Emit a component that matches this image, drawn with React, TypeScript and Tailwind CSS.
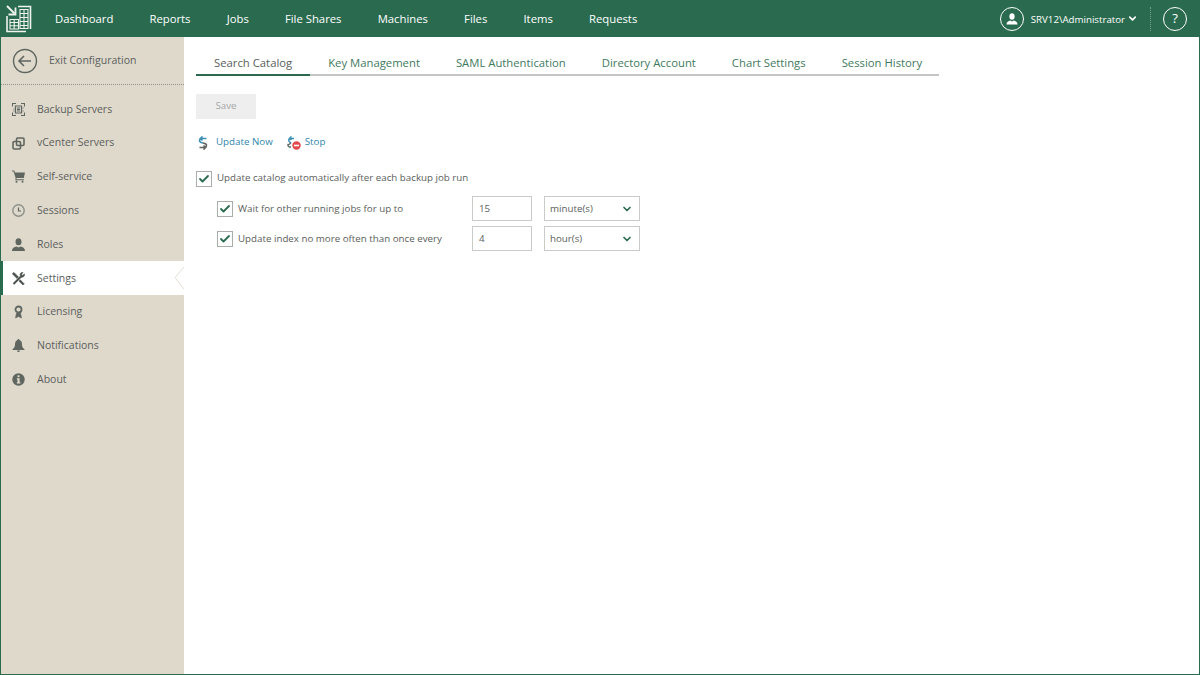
import React from 'react';
import { ChevronDown, Check } from 'lucide-react';

const font = { fontFamily: '"Open Sans", sans-serif' };

const topLinks = ['Dashboard', 'Reports', 'Jobs', 'File Shares', 'Machines', 'Files', 'Items', 'Requests'];
const tabs = ['Search Catalog', 'Key Management', 'SAML Authentication', 'Directory Account', 'Chart Settings', 'Session History'];

function Logo() {
  return (
    <svg width="26" height="28" viewBox="0 0 26 28" fill="none" stroke="#eef3f0">
      <path d="M1 1l7.500 7.500" strokeWidth="2" />
      <path d="M9.500 2.500v7h-7" strokeWidth="1.800" />
      <path d="M12 1.500h12.500V24M1 11v15.500h19" strokeWidth="1.600" />
      <path d="M14 4.500h8v19h-8zM14 8.500h8M14 12.500h8M14 16.500h8M14 20.500h8M18 4.500v19" strokeWidth="1.100" />
      <path d="M4 14.500h8.500v9.500H4zM4 17.500h8.500M4 20.700h8.500M8.200 14.500V24" strokeWidth="1.100" />
    </svg>
  );
}

const iconColor = '#5f6660';

const sideItems: { label: string; icon: React.ReactNode }[] = [
  {
    label: 'Backup Servers',
    icon: (
      <svg width="13" height="13" viewBox="0 0 13 13" fill="none" stroke={iconColor} strokeWidth="1.100">
        <path d="M.5 3.500V.5H4M9 .5h3.500v3M12.500 9.500v3H9M4 12.500H.5v-3" />
        <path d="M3.500 3h6v7h-6zM5 5h3M5 6.500h3M5 8h3" strokeWidth="1.200" />
        <path d="M1.500 6h1M1.500 8h1M10.500 5h1M10.500 8h1" />
      </svg>
    ),
  },
  {
    label: 'vCenter Servers',
    icon: (
      <svg width="13" height="13" viewBox="0 0 13 13" fill="none" stroke={iconColor} strokeWidth="1.600">
        <rect x="4.500" y="1" width="7.500" height="7.500" rx="1.200" />
        <rect x="1" y="4.500" width="7.500" height="7.500" rx="1.200" />
      </svg>
    ),
  },
  {
    label: 'Self-service',
    icon: (
      <svg width="13" height="13" viewBox="0 0 13 13" fill={iconColor}>
        <path d="M0 .5h2.300l.7 2h10l-1.200 5.500H4.300L4.700 9.300h7.300v1H3.300l.3-2.300L1.600 1.500H0z" />
        <circle cx="4.500" cy="11.800" r="1" />
        <circle cx="10.500" cy="11.800" r="1" />
      </svg>
    ),
  },
  {
    label: 'Sessions',
    icon: (
      <svg width="13" height="13" viewBox="0 0 13 13" fill="none" stroke={iconColor}>
        <circle cx="6.500" cy="6.500" r="5.700" strokeWidth="1.400" stroke="#8b908a" />
        <path d="M6.500 3.500v3.500H9" strokeWidth="1.200" />
      </svg>
    ),
  },
  {
    label: 'Roles',
    icon: (
      <svg width="13" height="13" viewBox="0 0 13 13" fill={iconColor}>
        <ellipse cx="6.500" cy="3.700" rx="3" ry="3.500" />
        <path d="M0 13c0-3 2.500-4 4.500-4.500L6.500 9.500l2-1C10.500 9 13 10 13 13z" />
      </svg>
    ),
  },
  {
    label: 'Settings',
    icon: (
      <svg width="13" height="13" viewBox="0 0 13 13" fill="none" stroke="#4b524d">
        <path d="M1.500 12L9 4.500" strokeWidth="2" />
        <path d="M8 2.500a2.500 2.500 0 0 1 3-2l-1.500 1.700 1.200 1.200 1.700-1.500a2.500 2.500 0 0 1-3.500 3z" fill="#4b524d" strokeWidth=".6" />
        <path d="M1 1l1-.5L6.500 5 5 6.500.5 2zM8 7.500L12.300 12 11 13 6.800 9" fill="#4b524d" strokeWidth=".6" />
      </svg>
    ),
  },
  {
    label: 'Licensing',
    icon: (
      <svg width="13" height="14" viewBox="0 0 13 14" fill="none" stroke={iconColor}>
        <circle cx="6.500" cy="4.500" r="3" strokeWidth="1.800" />
        <path d="M4.500 8l-1 5 3-1.500 3 1.500-1-5" fill={iconColor} strokeWidth=".6" />
      </svg>
    ),
  },
  {
    label: 'Notifications',
    icon: (
      <svg width="13" height="13" viewBox="0 0 13 13" fill={iconColor}>
        <path d="M6.500 0c.7 0 1 .4 1 1C9.500 1.500 10 3.500 10 5.500c0 2 .7 3.500 2.500 4.800v.7H.5v-.7C2.300 9 3 7.500 3 5.500 3 3.500 3.500 1.500 5.500 1c0-.6.300-1 1-1z" />
        <path d="M5 11.500h3c0 .9-.6 1.500-1.500 1.500S5 12.400 5 11.500z" />
      </svg>
    ),
  },
  {
    label: 'About',
    icon: (
      <svg width="13" height="13" viewBox="0 0 13 13">
        <circle cx="6.500" cy="6.500" r="6.200" fill={iconColor} />
        <rect x="5.500" y="2.300" width="2" height="1.900" fill="#dfd9cc" />
        <path d="M4.800 5.300h2.800v4h.8v1.200H4.800V9.300h.7V6.500h-.7z" fill="#dfd9cc" />
      </svg>
    ),
  },
];

function CheckBox() {
  return (
    <span className="flex h-[16px] w-[16px] shrink-0 items-center justify-center border border-[#a9aeaa] bg-white">
      <Check size={12} strokeWidth={3.6} className="text-[#2a6b4f]" />
    </span>
  );
}

function Row({ label, value, unit }: { label: string; value: string; unit: string }) {
  return (
    <div className="flex h-[30px] items-center">
      <CheckBox />
      <span className="ml-[5px] w-[234px] pt-[1px] text-[#5b605c]">{label}</span>
      <span className="flex h-[25px] w-[60px] items-center border border-[#c9cbc8] pl-[6px] pt-[1px] text-[#5b605c]">{value}</span>
      <span className="ml-[12px] flex h-[25px] w-[96px] items-center justify-between border border-[#c9cbc8] pl-[5px] pr-[6px] pt-[1px] text-[#5b605c]">
        {unit}
        <ChevronDown size={12} strokeWidth={3.4} className="text-[#2a6b4f]" />
      </span>
    </div>
  );
}

export default function App() {
  return (
    <div className="flex h-[675px] w-[1200px] flex-col overflow-hidden bg-white text-[9.750px]" style={font}>
      {/* Top bar */}
      <header className="flex h-[37px] shrink-0 items-center bg-[#2a6b4f] text-white">
        <div className="flex w-[55px] shrink-0 justify-start pl-[6px]">
          <Logo />
        </div>
        <nav className="flex gap-[36.150px] pt-[1px] text-[11.300px]">
          {topLinks.map((link) => (
            <span key={link}>{link}</span>
          ))}
        </nav>
        <div className="ml-auto mr-[13px] flex items-center">
          <span className="flex h-[24px] w-[24px] items-center justify-center rounded-full border-[1.500px] border-white">
            <svg width="12" height="12" viewBox="0 0 12 12" fill="white">
              <ellipse cx="6" cy="3.500" rx="2.600" ry="3.200" />
              <path d="M.5 11.500c0-2.600 2-3.600 3.700-4L6 8.500l1.800-1c1.700.4 3.700 1.400 3.700 4z" />
            </svg>
          </span>
          <span className="ml-[7px] pt-[3px] text-[9.700px]">SRV12\Administrator</span>
          <ChevronDown size={11} strokeWidth={3.5} className="ml-[2px]" />
          <span className="ml-[12px] h-[24px] border-l border-dotted border-[#7ba08e]" />
          <span className="ml-[12px] flex h-[24px] w-[24px] items-center justify-center rounded-full border-[1.500px] border-white text-[13px]">?</span>
        </div>
      </header>

      <div className="flex min-h-0 flex-1 border-b border-r border-[#2a6b4f]">
        {/* Sidebar */}
        <aside className="w-[184px] shrink-0 border-l border-[#2a6b4f] bg-[#dfd9cc] text-[10.500px] text-[#5b605c]">
          <div className="flex h-[48px] items-center border-b border-dotted border-[#8f9088] pl-[11px]">
            <svg width="26" height="26" viewBox="0 0 26 26" fill="none" stroke="#5f6660" strokeWidth="1.400">
              <circle cx="13" cy="13" r="11.500" />
              <path d="M19 13H7M12 8l-5 5 5 5" strokeWidth="1.600" />
            </svg>
            <span className="ml-[11px]">Exit Configuration</span>
          </div>
          <div className="pt-[7.500px]">
            {sideItems.map(({ label, icon }) =>
              label === 'Settings' ? (
                <div key={label} className="relative flex h-[33.800px] items-center border-l-[2px] border-[#2a6b4f] bg-white pl-[9px]">
                  <span className="flex w-[25px] items-center">{icon}</span>
                  {label}
                  <svg width="10" height="24" viewBox="0 0 10 24" fill="none" stroke="#e3dfd5" className="absolute right-0 top-[5px]">
                    <path d="M10 1L1 11.500 10 23" />
                  </svg>
                </div>
              ) : (
                <div key={label} className="flex h-[33.800px] items-center pl-[11px]">
                  <span className="flex w-[25px] items-center">{icon}</span>
                  {label}
                </div>
              ),
            )}
          </div>
        </aside>

        {/* Content */}
        <main className="min-w-0 flex-1 pl-[12px]">
          <div className="flex h-[38.500px] w-[743px] items-end border-b-2 border-[#c3c6c3]">
            {tabs.map((tab, i) => (
              <span
                key={tab}
                className={`-mb-[2px] flex h-[24px] items-start whitespace-nowrap border-b-2 px-[18px] pt-[3px] text-[11.300px] ${
                  i === 0 ? 'border-[#2a6b4f] text-[#5b605c]' : 'border-transparent text-[#3f7a60]'
                }`}
              >
                {tab}
              </span>
            ))}
          </div>

          <div className="mt-[18px] flex h-[25px] w-[60px] items-center justify-center bg-[#eeeeee] pt-[1px] text-[#a8a8a8]">Save</div>

          <div className="mt-[15px] flex h-[18px] items-center text-[#2f86ad]">
            <svg width="12" height="14" viewBox="0 0 12 14" fill="none" strokeWidth="1.700" className="ml-[1px]">
              <path d="M9.500 2.500H4.500a2 2 0 0 0-1 3.700L6 7" stroke="#3d8fb5" />
              <path d="M2.500 11.500H7.500a2 2 0 0 0 1-3.700L6 7" stroke="#5f6660" />
              <path d="M5.500 .5L3.500 2.500l2 2" stroke="#3d8fb5" />
              <path d="M6.500 9.500l2 2-2 2" stroke="#5f6660" />
            </svg>
            <span className="ml-[7px]">Update Now</span>
            <svg width="14" height="14" viewBox="0 0 14 14" fill="none" strokeWidth="1.500" className="ml-[14px]">
              <path d="M7 2.500H3.500a1.800 1.800 0 0 0-1 3.300L4 7" stroke="#3d8fb5" />
              <path d="M4.500 .5L2.500 2.500l2 1.500" stroke="#3d8fb5" />
              <path d="M1.500 8a1.800 1.800 0 0 0 1.500 3h1M4 7L2 8.500" stroke="#5f6660" />
              <circle cx="9.500" cy="9.500" r="4.200" fill="#e2474b" stroke="none" />
              <rect x="7" y="8.700" width="5" height="1.600" fill="white" />
            </svg>
            <span className="ml-[4px]">Stop</span>
          </div>

          <div className="mt-[18px] flex h-[18px] items-center">
            <CheckBox />
            <span className="ml-[5px] text-[#5b605c]">Update catalog automatically after each backup job run</span>
          </div>

          <div className="mt-[6px] pl-[21px]">
            <Row label="Wait for other running jobs for up to" value="15" unit="minute(s)" />
            <Row label="Update index no more often than once every" value="4" unit="hour(s)" />
          </div>
        </main>
      </div>
    </div>
  );
}
